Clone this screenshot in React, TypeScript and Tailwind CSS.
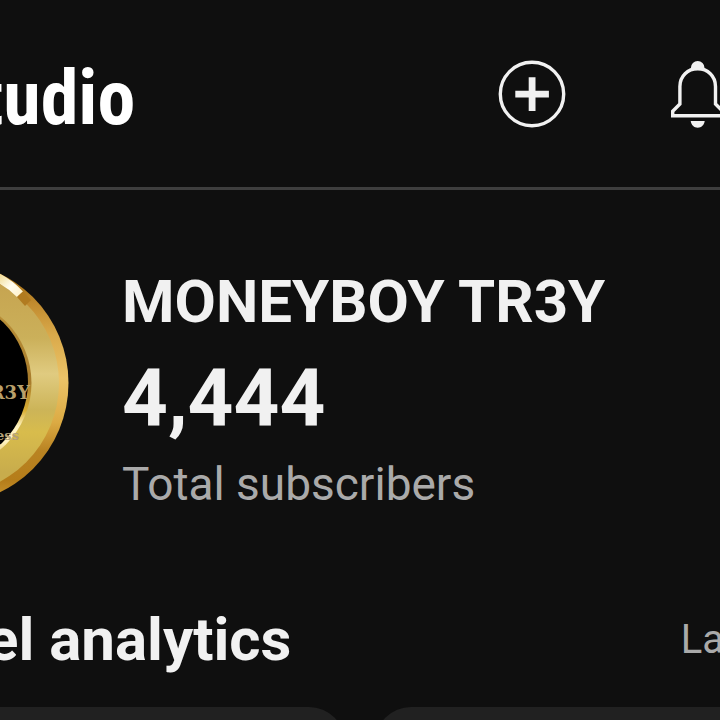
import React from 'react';

function PlusCircleIcon() {
  return (
    <svg viewBox="0 0 68 68" className="block h-[68px] w-[68px]" aria-hidden="true">
      <circle cx="34" cy="34" r="31.7" fill="none" stroke="#f1f1f1" strokeWidth="3.4" />
      <path d="M30.7 17.3h6.8v13.4h13.4v6.8H37.5v13.4h-6.8V37.5H17.3v-6.8h13.4z" fill="#f1f1f1" />
    </svg>
  );
}

function BellIcon() {
  return (
    <svg viewBox="0 0 54 68" className="block h-[68px] w-[54px] shrink-0" aria-hidden="true">
      <path
        d="M2.700 55.700V51.200L9.900 44V26.500C9.900 16 17.700 8.800 27.700 8.800s17.800 7.200 17.800 17.700V44l7.200 7.200v4.500z"
        fill="none"
        stroke="#f1f1f1"
        strokeWidth="3.4"
      />
      <path d="M20.900 10V7.800a6.800 6.800 0 0 1 13.600 0V10c-4-2.200-9.600-2.200-13.600 0z" fill="#f1f1f1" />
      <path d="M20.700 61h14c-.6 4-3.300 6.700-7 6.700S21.300 65 20.700 61z" fill="#f1f1f1" />
    </svg>
  );
}

function Avatar() {
  return (
    <svg
      viewBox="0 0 70 244"
      className="block h-[244px] w-[70px] shrink-0"
      role="img"
      aria-label="Channel avatar"
    >
      <defs>
        <linearGradient id="rim" x1="0" y1="0" x2="0" y2="1">
          <stop offset="0.12" stopColor="#b17b20" />
          <stop offset="0.17" stopColor="#c08a2e" />
          <stop offset="0.3" stopColor="#d9a94a" />
          <stop offset="0.48" stopColor="#ecc468" />
          <stop offset="0.66" stopColor="#dcab44" />
          <stop offset="0.78" stopColor="#b98322" />
          <stop offset="0.9" stopColor="#b57d1a" />
          <stop offset="1" stopColor="#cf9c35" />
        </linearGradient>
        <linearGradient id="face" x1="0" y1="0" x2="0" y2="1">
          <stop offset="0.05" stopColor="#c6a450" />
          <stop offset="0.3" stopColor="#cbb05a" />
          <stop offset="0.46" stopColor="#e0cb80" />
          <stop offset="0.62" stopColor="#ccb458" />
          <stop offset="0.72" stopColor="#d8bc4c" />
          <stop offset="0.9" stopColor="#c8ac4c" />
        </linearGradient>
        <linearGradient id="bevel" x1="0" y1="0" x2="0" y2="1">
          <stop offset="0.1" stopColor="#b98f38" />
          <stop offset="0.5" stopColor="#a87c2c" />
          <stop offset="0.66" stopColor="#d8ae34" />
          <stop offset="0.75" stopColor="#fff3c0" />
          <stop offset="0.84" stopColor="#fff3c0" />
          <stop offset="0.95" stopColor="#d8b64b" />
        </linearGradient>
        <linearGradient id="shine" x1="0" y1="0" x2="1" y2="1">
          <stop offset="0" stopColor="#f2dc94" />
          <stop offset="0.5" stopColor="#fffdf0" />
          <stop offset="0.9" stopColor="#fff3cc" />
        </linearGradient>
      </defs>
      <circle cx="-53" cy="122" r="121.500" fill="url(#rim)" />
      <circle cx="-53" cy="122" r="112" fill="url(#face)" />
      <path d="M0 12.700Q13 19.500 23 30.500L17 36Q9 28 0 23z" fill="url(#shine)" />
      <path d="M23 30.500L31 39L25 45L17 36z" fill="#b17b20" />
      <circle cx="-55" cy="122" r="86.500" fill="url(#bevel)" />
      <circle cx="-56" cy="121" r="84" fill="#000" />
      <text x="30" y="138" textAnchor="end" fontFamily="'DejaVu Serif', serif" fontWeight="bold" fontSize="18" fill="#b9a06a">
        R3Y
      </text>
      <text x="19" y="179" textAnchor="end" fontFamily="'DejaVu Serif', serif" fontWeight="bold" fontSize="13" fill="#b3a078">
        ess
      </text>
    </svg>
  );
}

export default function App() {
  return (
    <div className="flex h-screen flex-col overflow-hidden bg-[#0f0f0f] font-['Roboto',sans-serif] text-[#f1f1f1]">
      <header className="flex h-[190px] shrink-0 items-center justify-between overflow-hidden border-b-3 border-[#3e3e3e]">
        <div className="-ml-5 pt-2 text-[76px] leading-[96px] font-bold text-white font-['Liberation_Sans_Narrow','Roboto_Condensed','Open_Sans_Condensed',sans-serif]">
          tudio
        </div>
        <div className="-mr-1 flex shrink-0 items-center gap-[104px]">
          <button type="button" aria-label="Create">
            <PlusCircleIcon />
          </button>
          <button type="button" aria-label="Notifications">
            <BellIcon />
          </button>
        </div>
      </header>

      <section className="flex shrink-0 items-start gap-[52px] pt-[71px]">
        <Avatar />
        <div className="flex flex-col gap-1 pt-px whitespace-nowrap">
          <h1 className="text-[60px] leading-[80px] font-bold">MONEYBOY TR3Y</h1>
          <p className="text-[80px] leading-[104px] font-bold">4,444</p>
          <p className="text-[46px] leading-[60px] text-[#aaaaaa]">Total subscribers</p>
        </div>
      </section>

      <section className="flex shrink-0 flex-col pt-[86px]">
        <div className="flex items-center justify-between whitespace-nowrap">
          <h2 className="-ml-3.5 text-[60px] leading-[80px] font-bold">el analytics</h2>
          <p className="-mr-1 text-[40px] leading-[56px] text-[#aaaaaa]">La</p>
        </div>
        <div className="mt-[27px] grid grid-cols-2 gap-[30px]">
          <div className="h-40 rounded-r-[36px] bg-[#212121]" />
          <div className="h-40 rounded-l-[36px] bg-[#212121]" />
        </div>
      </section>
    </div>
  );
}
